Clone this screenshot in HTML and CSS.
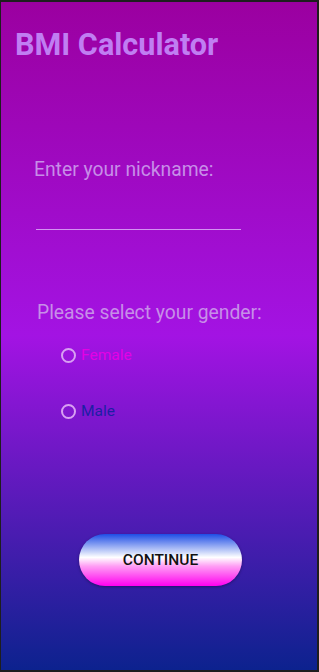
FILE: index.html
```html
<!DOCTYPE html>
<html>
	<head>
		<meta charset="utf-8">
		<title>BMI Calculator</title>
		<link rel="stylesheet" href="styles.css">
	</head>
	<body>
		<div class="screen">
			<h1 class="title">BMI Calculator</h1>
			<div class="field">
				<p class="label">Enter your nickname:</p>
				<div class="line"></div>
			</div>
			<div class="gender">
				<p class="label">Please select your gender:</p>
				<ul class="radios">
					<li class="female"><span class="dot"></span>Female</li>
					<li class="male"><span class="dot"></span>Male</li>
				</ul>
			</div>
			<div class="go">
				<div class="btn">CONTINUE</div>
			</div>
		</div>
	</body>
</html>
```

FILE: styles.css
```css
*{margin:0;padding:0;box-sizing:border-box;}
body{background:#1e1e1e;font-family:Roboto,"Noto Sans",sans-serif;}
ul li{list-style:none;}
.screen{width:319px;height:672px;border-style:solid;border-color:#1e1e1e;border-width:2px 2px 2px 1px;background:linear-gradient(#9b00a0,#a313e3 50%,#0c228e);display:flex;flex-direction:column;}
.title{font-size:30.6px;line-height:36px;font-weight:700;color:#c07ef2;padding:25px 0 0 14px;}
.label{font-size:19.3px;line-height:24px;color:#c78ee8;}
.field{padding:95px 0 0 33px;}
.line{width:205px;height:1px;background:#d394f2;margin:47px 0 0 2px;}
.gender{padding:71px 0 0 36px;}
.radios{padding:18px 0 0 24px;}
.radios li{display:flex;align-items:center;gap:5px;font-size:15.5px;height:24px;margin-bottom:32px;}
.radios .dot{width:15px;height:15px;border:2px solid #d8a0f2;border-radius:50%;}
.female{color:#e400e6;}
.male{color:#1c1fa4;}
.go{padding:79px 0 0 78px;}
.btn{width:163px;height:52px;border-radius:26px;background:linear-gradient(#1e4de6,#fff 45%,#ff9df4 62%,#ff00ef);box-shadow:0 1px 3px rgba(0,0,0,.35);text-align:center;line-height:52px;font-size:15.5px;font-weight:500;color:#111;}
```
